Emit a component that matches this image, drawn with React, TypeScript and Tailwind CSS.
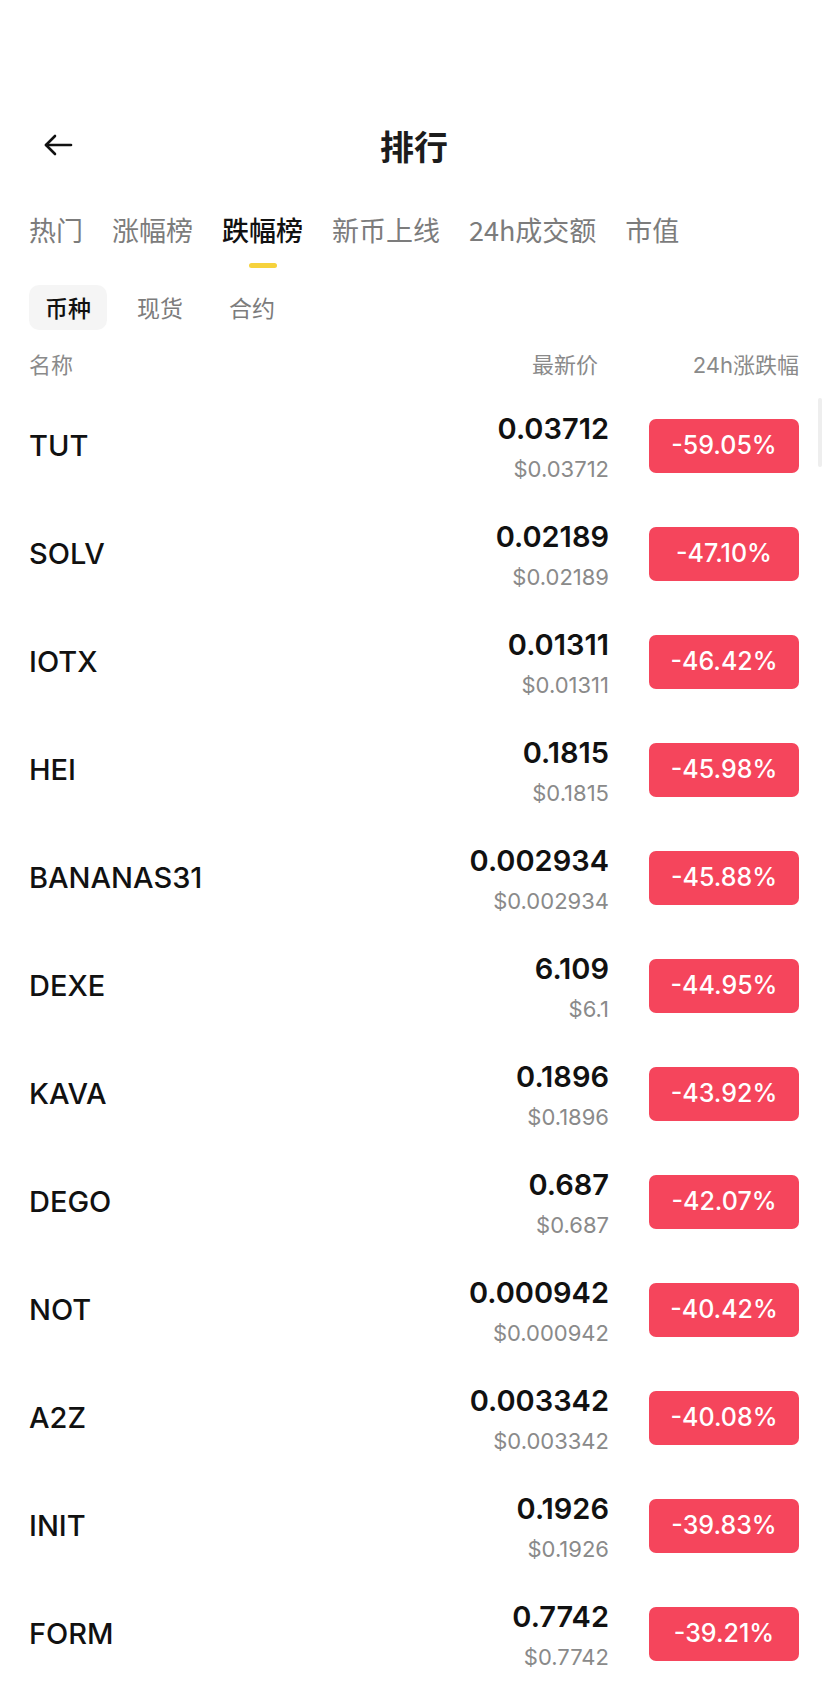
import React from 'react'

const ROWS = [
  { symbol: 'TUT', price: '0.03712', usd: '$0.03712', change: '-59.05%' },
  { symbol: 'SOLV', price: '0.02189', usd: '$0.02189', change: '-47.10%' },
  { symbol: 'IOTX', price: '0.01311', usd: '$0.01311', change: '-46.42%' },
  { symbol: 'HEI', price: '0.1815', usd: '$0.1815', change: '-45.98%' },
  { symbol: 'BANANAS31', price: '0.002934', usd: '$0.002934', change: '-45.88%' },
  { symbol: 'DEXE', price: '6.109', usd: '$6.1', change: '-44.95%' },
  { symbol: 'KAVA', price: '0.1896', usd: '$0.1896', change: '-43.92%' },
  { symbol: 'DEGO', price: '0.687', usd: '$0.687', change: '-42.07%' },
  { symbol: 'NOT', price: '0.000942', usd: '$0.000942', change: '-40.42%' },
  { symbol: 'A2Z', price: '0.003342', usd: '$0.003342', change: '-40.08%' },
  { symbol: 'INIT', price: '0.1926', usd: '$0.1926', change: '-39.83%' },
  { symbol: 'FORM', price: '0.7742', usd: '$0.7742', change: '-39.21%' },
]

const TABS = ['热门', '涨幅榜', '跌幅榜', '新币上线', '24h成交额', '市值']
const SUB_TABS = ['币种', '现货', '合约']

function BackArrow() {
  return (
    <svg width="30" height="22" viewBox="0 0 30 22" fill="none">
      <path d="M28 11H3" stroke="#111" strokeWidth="2.6" strokeLinecap="round" />
      <path d="M12 2L3 11L12 20" stroke="#111" strokeWidth="2.6" strokeLinecap="round" strokeLinejoin="round" />
    </svg>
  )
}

export default function App() {
  return (
    <div
      className="relative h-[1683px] w-[828px] overflow-hidden bg-white"
      style={{ fontFamily: 'Inter, "Noto Sans CJK SC", sans-serif' }}
    >
      {/* Title bar */}
      <div className="mt-[100px] grid h-[90px] grid-cols-[1fr_auto_1fr] items-center px-[29px]">
        <div className="flex items-center pl-[14px]">
          <BackArrow />
        </div>
        <div className="text-[34px] font-bold text-[#1c1c1c]" style={{ fontFamily: '"Noto Sans CJK SC", sans-serif' }}>
          排行
        </div>
        <div />
      </div>

      {/* Main tabs */}
      <div className="flex gap-[29px] px-[29px] pt-[20px]" style={{ fontFamily: '"Noto Sans CJK SC", sans-serif' }}>
        {TABS.map((t, i) => (
          <div key={t} className="flex flex-col items-center">
            <span
              className={`text-[27px] leading-[40px] ${
                i === 2 ? 'font-medium text-[#111]' : 'text-[#7c7c7c]'
              }`}
            >
              {t}
            </span>
            <div className={`mt-[13px] h-[5px] w-[28px] rounded-full ${i === 2 ? 'bg-[#f6d23c]' : 'bg-transparent'}`} />
          </div>
        ))}
      </div>

      {/* Sub tabs */}
      <div className="mt-[17px] flex gap-[14px] px-[29px]" style={{ fontFamily: '"Noto Sans CJK SC", sans-serif' }}>
        {SUB_TABS.map((t, i) => (
          <div
            key={t}
            className={`flex h-[45px] items-center rounded-[10px] px-[16px] text-[23px] ${
              i === 0 ? 'bg-[#f5f5f5] font-medium text-[#111]' : 'text-[#7c7c7c]'
            }`}
          >
            {t}
          </div>
        ))}
      </div>

      {/* Column header */}
      <div className="mt-[20px] flex h-[30px] items-center px-[29px] text-[22px] text-[#8a8a8a]">
        <span className="flex-1">名称</span>
        <span>最新价</span>
        <span className="w-[201px] text-right">24h涨跌幅</span>
      </div>

      {/* List */}
      <div className="mt-[12px] px-[29px]">
        {ROWS.map((r) => (
          <div key={r.symbol} className="flex h-[108px] items-center">
            <span className="flex-1 text-[29px] font-medium text-[#111]">{r.symbol}</span>
            <div className="flex flex-col items-end pt-[2px]">
              <span className="text-[29px] font-semibold leading-[34px] text-[#111]">{r.price}</span>
              <span className="mt-[9px] text-[22px] leading-[28px] text-[#8a8a8a]">{r.usd}</span>
            </div>
            <div className="ml-[40px] flex h-[54px] w-[150px] items-center justify-center rounded-[7px] bg-[#f5455c] text-[25px] font-medium text-white">
              {r.change}
            </div>
          </div>
        ))}
      </div>

      {/* Scroll indicator */}
      <div className="absolute right-[6px] top-[398px] h-[69px] w-[4px] rounded-full bg-[#eeeeee]" />
    </div>
  )
}
